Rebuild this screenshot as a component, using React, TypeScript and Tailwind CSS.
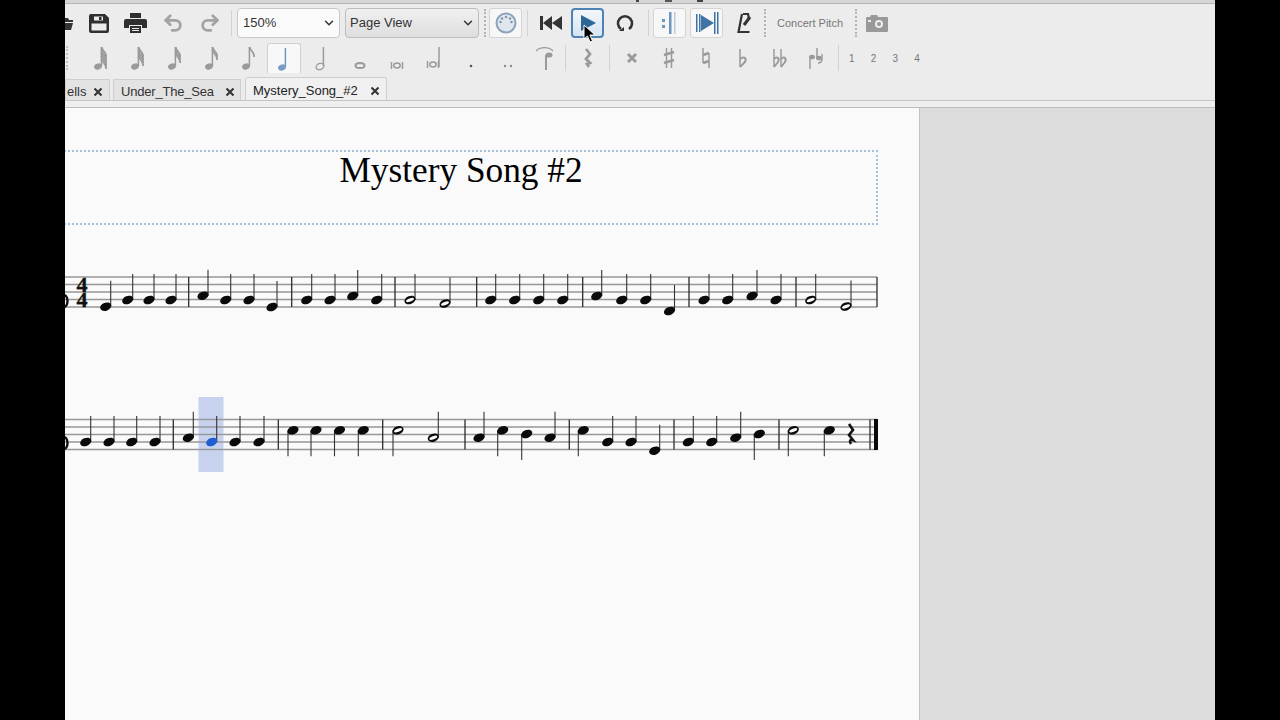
import { ReactNode } from 'react'
import { ChevronDown, Undo2, Redo2 } from 'lucide-react'

type Note = [number, number, 'q' | 'h', 'u' | 'd']

const staffOne: Note[] = [
  [105.7, 306.7, 'q', 'u'], [127.7, 300, 'q', 'u'], [149, 300, 'q', 'u'], [171, 300, 'q', 'u'],
  [203, 295.7, 'q', 'u'], [225.7, 300, 'q', 'u'], [249, 300, 'q', 'u'], [272, 307, 'q', 'u'],
  [306.7, 300, 'q', 'u'], [330, 300, 'q', 'u'], [352.7, 296, 'q', 'u'], [376.7, 300, 'q', 'u'],
  [410, 300, 'h', 'u'], [445, 303.5, 'h', 'u'],
  [490.7, 300, 'q', 'u'], [514.7, 300, 'q', 'u'], [538.7, 300, 'q', 'u'], [562.7, 300, 'q', 'u'],
  [596.7, 296, 'q', 'u'], [621.7, 300, 'q', 'u'], [645.7, 300, 'q', 'u'], [669.5, 311, 'q', 'u'],
  [704, 300, 'q', 'u'], [727.7, 300, 'q', 'u'], [752, 296, 'q', 'u'], [776, 300, 'q', 'u'],
  [810.7, 300, 'h', 'u'], [846, 306.5, 'h', 'u'],
]

const staffTwo: Note[] = [
  [85.7, 442, 'q', 'u'], [109, 442, 'q', 'u'], [131.7, 442, 'q', 'u'], [155, 442, 'q', 'u'],
  [188.3, 437.7, 'q', 'u'], [235, 442, 'q', 'u'], [259, 442, 'q', 'u'],
  [293, 430.3, 'q', 'd'], [316, 430.3, 'q', 'd'], [339.5, 430.3, 'q', 'd'], [363.3, 430.3, 'q', 'd'],
  [398, 430.3, 'h', 'd'], [433.3, 437.7, 'h', 'u'],
  [479, 437.7, 'q', 'u'], [502.7, 430.3, 'q', 'd'], [526.7, 434, 'q', 'd'], [550, 437.7, 'q', 'u'],
  [583.3, 430.3, 'q', 'd'], [607.7, 442, 'q', 'u'], [631, 442, 'q', 'u'], [654.7, 450.7, 'q', 'u'],
  [688.3, 442, 'q', 'u'], [711.7, 442, 'q', 'u'], [735.7, 437.7, 'q', 'u'], [759.3, 434, 'q', 'd'],
  [793.3, 430.3, 'h', 'd'], [829.3, 430.3, 'q', 'd'],
]

function ScoreNote({ note, color = '#0a0a0a' }: { note: Note; color?: string }) {
  const [x, y, kind, dir] = note
  const stemX = dir === 'u' ? x + 5 : x - 5
  const stemEnd = dir === 'u' ? y - 26 : y + 26
  return (
    <g>
      <line x1={stemX} x2={stemX} y1={y} y2={stemEnd} stroke="#333" strokeWidth="1.1" />
      <ellipse cx={x} cy={y} rx="5.8" ry="4" fill={color} transform={`rotate(-22 ${x} ${y})`} />
      {kind === 'h' && (
        <ellipse cx={x} cy={y} rx="4.2" ry="1.6" fill="#fafafa" transform={`rotate(-22 ${x} ${y})`} />
      )}
    </g>
  )
}

function Staff({ top, bars, notes, height, y0, children }: {
  top: number
  bars: number[]
  notes: Note[]
  height: number
  y0: number
  children?: ReactNode
}) {
  return (
    <svg viewBox={`65 ${y0} 854 ${height}`} className="block w-[854px]" style={{ height }}>
      {[0, 1, 2, 3, 4].map((i) => (
        <line key={i} x1="65" x2="877" y1={top + i * 7.5} y2={top + i * 7.5} stroke="#969696" strokeWidth="1.4" />
      ))}
      {bars.map((b) => (
        <line key={b} x1={b} x2={b} y1={top} y2={top + 30} stroke="#2c2c2c" strokeWidth="1.3" />
      ))}
      {children}
      {notes.map((n, i) => (
        <ScoreNote key={i} note={n} />
      ))}
    </svg>
  )
}

function NoteGlyph({ flags = 0, head = '#9a9a9a', stem = '#9a9a9a', open = false }: {
  flags?: number
  head?: string
  stem?: string
  open?: boolean
}) {
  return (
    <svg width="18" height="28" viewBox="0 0 18 28" className="ml-[3px]">
      <line x1="8.4" x2="8.4" y1="3" y2="22" stroke={stem} strokeWidth="1.5" />
      {Array.from({ length: flags }).map((_, i) => (
        <path key={i} d={`M8.4 ${3 + i * 3} C9 ${7 + i * 3} 14 ${8 + i * 3} 13 ${13 + i * 3}`} fill="none" stroke={stem} strokeWidth="1.8" />
      ))}
      <ellipse cx="5" cy="22.5" rx="4" ry="3" fill={open ? 'none' : head} stroke={head} strokeWidth={open ? 1.3 : 0} transform="rotate(-22 5 22.5)" />
    </svg>
  )
}

function GrayIcon({ children }: { children: ReactNode }) {
  return (
    <svg width="24" height="28" viewBox="0 0 24 28" fill="none" stroke="#9a9a9a" strokeWidth="1.5">
      {children}
    </svg>
  )
}

function Slot({ children, className = 'w-[37px]' }: { children?: ReactNode; className?: string }) {
  return <div className={`flex h-[30px] items-center justify-center ${className}`}>{children}</div>
}

function Handle({ className = '' }: { className?: string }) {
  return <div className={`h-[28px] w-0 border-l-2 border-dotted border-[#b4b4b4] ${className}`} />
}

function Sep({ className = '' }: { className?: string }) {
  return <div className={`h-[26px] w-px bg-[#d2d2d2] ${className}`} />
}

function ToggleButton({ children, className = '' }: { children: ReactNode; className?: string }) {
  return (
    <div className={`flex h-[30px] w-[33px] items-center justify-center rounded-[3px] border border-[#d4d4d4] bg-[#f7f7f7] ${className}`}>
      {children}
    </div>
  )
}

function Tab({ label, active, className = '' }: { label: string; active?: boolean; className?: string }) {
  return (
    <div
      className={`flex items-center justify-between border border-b-0 border-[#cfcfcf] pt-[4px] text-[13px] ${
        active ? 'h-[23px] rounded-t-[3px] bg-[#f0f0f0] text-[#222]' : 'h-[21px] bg-[#e3e3e3] text-[#333]'
      } ${className}`}
    >
      <span>{label}</span>
      <svg width="10" height="10" viewBox="0 0 10 10" stroke="#333" strokeWidth="2">
        <path d="M1.5 1.5l7 7M8.5 1.5l-7 7" />
      </svg>
    </div>
  )
}

export default function App() {
  return (
    <div className="flex h-[720px] w-[1280px] overflow-hidden bg-black font-['Liberation_Sans',sans-serif]">
      <div className="ml-[65px] flex h-full w-[1150px] flex-col overflow-hidden bg-[#dcdcdc]">
        {/* title bar sliver, only the descenders of the window title show */}
        <div className="flex h-[4px] items-start border-b border-[#b5b5b5] bg-[#d6d6d6]">
          <div className="ml-[571px] h-[2px] w-[3px] bg-[#444]" />
          <div className="ml-[26px] h-[2px] w-[7px] bg-[#555]" />
          <div className="ml-[25px] h-[2px] w-[6px] bg-[#444]" />
        </div>

        <div className="h-[97px] border-b border-[#c4c4c4] bg-[#ececec]">
          {/* Row 1: file, view, playback */}
          <div className="flex h-[34px] items-center pt-[4px]">
            <svg width="8" height="18" viewBox="0 0 8 18" fill="#333">
              <path d="M0 4h3l1 2h4v2H0zM0 9h8l-2 7H0z" />
            </svg>
            <svg width="20" height="19" viewBox="0 0 20 19" className="ml-[16px]">
              <path
                fillRule="evenodd"
                fill="#2f2f2f"
                d="M2 0h14l4 4v13a2 2 0 0 1-2 2H2a2 2 0 0 1-2-2V2a2 2 0 0 1 2-2zM5 2.500v4h9v-4zM2.500 9.500v7h15v-7z"
              />
              <rect x="10" y="3" width="2.500" height="3" fill="#2f2f2f" />
            </svg>
            <svg width="23" height="20" viewBox="0 0 23 20" fill="#2f2f2f" className="ml-[15px]">
              <path d="M6 0h11v5H6zM2 6h19a2 2 0 0 1 2 2v7h-5v-3H5v3H0V8a2 2 0 0 1 2-2z" />
              <path d="M6 13h11v7H6z" />
              <path d="M8 15h7v1H8zM8 17h7v1H8z" fill="#ececec" />
            </svg>
            <Undo2 size={22} strokeWidth={3} className="ml-[15px] text-[#a3a3a3]" />
            <Redo2 size={22} strokeWidth={3} className="ml-[15px] text-[#a3a3a3]" />
            <Sep className="ml-[10px]" />
            <div className="ml-[5px] flex h-[30px] w-[103px] items-center justify-between rounded-[4px] border border-[#c8c8c8] bg-[#fbfbfb] pl-[5px] pr-[3px] text-[13px] text-[#333]">
              150%
              <ChevronDown size={14} strokeWidth={2.5} className="text-[#333]" />
            </div>
            <div className="ml-[5px] flex h-[30px] w-[134px] items-center justify-between rounded-[4px] border border-[#bdbdbd] bg-gradient-to-b from-[#f0f0f0] to-[#dedede] pl-[4px] pr-[3px] text-[13px] text-[#333]">
              Page View
              <ChevronDown size={14} strokeWidth={2.5} className="text-[#333]" />
            </div>
            <Handle className="ml-[5px]" />
            <ToggleButton className="ml-[3px]">
              <svg width="24" height="24" viewBox="0 0 24 24">
                <circle cx="12" cy="12" r="9.5" fill="#dfe6ee" stroke="#8ca3bb" strokeWidth="2" />
                {[[6.5, 11], [8, 7.5], [12, 6], [16, 7.5], [17.5, 11]].map(([x, y]) => (
                  <circle key={x} cx={x} cy={y} r="1.2" fill="#7d94ac" />
                ))}
              </svg>
            </ToggleButton>
            <Sep className="ml-[5px]" />
            <svg width="22" height="14" viewBox="0 0 22 14" fill="#333" className="ml-[12px]">
              <path d="M0 0h3v14H0zM12 0v14L3 7zM22 0v14L12 7z" />
            </svg>
            <div className="relative ml-[9px] flex h-[30px] w-[33px] items-center justify-center rounded-[4px] border-2 border-[#4f83b5] bg-gradient-to-b from-[#f3f7fb] to-[#d6e4f2]">
              <svg width="16" height="16" viewBox="0 0 16 16" fill="#2f6698">
                <path d="M1 0l15 8-15 8z" />
              </svg>
              <svg width="14" height="20" viewBox="0 0 14 20" className="absolute left-[10px] top-[14px]">
                <path d="M1 1v14l3.5-3 2.5 6 2.5-1-2.5-6h5z" fill="#000" stroke="#fff" strokeWidth="1" />
              </svg>
            </div>
            <svg width="18" height="18" viewBox="0 0 18 18" fill="none" stroke="#333" strokeWidth="2.6" className="ml-[12px]">
              <path d="M5 15a7 7 0 1 1 8 0" />
              <path d="M3 17h5v-4z" fill="#333" stroke="none" />
            </svg>
            <Sep className="ml-[14px]" />
            <ToggleButton className="ml-[4px]">
              <svg width="18" height="24" viewBox="0 0 18 24" fill="#6f97bd">
                <rect x="1" y="8" width="3" height="3" />
                <rect x="1" y="14" width="3" height="3" />
                <rect x="8" y="1" width="2.5" height="22" />
                <rect x="13" y="1" width="1.5" height="22" fill="#b9cde0" />
              </svg>
            </ToggleButton>
            <ToggleButton className="ml-[4px]">
              <svg width="24" height="24" viewBox="0 0 24 24" fill="#3f73a5">
                <rect x="1" y="3" width="1.5" height="18" />
                <rect x="4" y="3" width="1.5" height="18" />
                <path d="M6 4l13 8-13 8z" />
                <rect x="19" y="1" width="1.5" height="22" />
                <rect x="22" y="1" width="1.5" height="22" />
              </svg>
            </ToggleButton>
            <svg width="15" height="20" viewBox="0 0 15 20" fill="none" stroke="#333" strokeWidth="2.2" className="ml-[14px]">
              <path d="M6 1h5l1 5M5 1L1.500 19h11" />
              <path d="M7 12L13 4" strokeWidth="3" />
            </svg>
            <Handle className="ml-[12px]" />
            <span className="ml-[11px] text-[11px] text-[#777]">Concert Pitch</span>
            <Handle className="ml-[12px]" />
            <svg width="22" height="17" viewBox="0 0 22 17" className="ml-[9px]">
              <path d="M1 2h3l1-2h6l1 2h9a1 1 0 0 1 1 1v13a1 1 0 0 1-1 1H1a1 1 0 0 1-1-1V3a1 1 0 0 1 1-1z" fill="#999" />
              <circle cx="13" cy="9" r="4" fill="#ececec" />
              <circle cx="13" cy="9" r="2" fill="#999" />
              <rect x="2" y="5" width="3" height="2" fill="#ececec" />
            </svg>
          </div>

          {/* Row 2: note input */}
          <div className="flex h-[36px] items-center pt-[4px]">
            <div className="ml-[1px] h-[24px] w-0 border-l-2 border-dotted border-[#c4c4c4]" />
            <div className="ml-[14px] flex items-center">
              <Slot><NoteGlyph flags={5} /></Slot>
              <Slot><NoteGlyph flags={4} /></Slot>
              <Slot><NoteGlyph flags={3} /></Slot>
              <Slot><NoteGlyph flags={2} /></Slot>
              <Slot><NoteGlyph flags={1} /></Slot>
              <div className="mr-[3px] flex h-[30px] w-[34px] items-center justify-center rounded-t-[3px] border border-b-0 border-[#cfcfcf] bg-[#f8f8f8]">
                <NoteGlyph head="#7b9cc0" stem="#6f97c4" />
              </div>
              <Slot><NoteGlyph open /></Slot>
              <Slot>
                <GrayIcon><ellipse cx="12" cy="21.500" rx="4.5" ry="2.6" strokeWidth="2" /></GrayIcon>
              </Slot>
              <Slot>
                <GrayIcon>
                  <ellipse cx="12" cy="21.500" rx="3.2" ry="2.4" strokeWidth="1.5" />
                  <path d="M6.500 18v7M17.500 18v7" />
                </GrayIcon>
              </Slot>
              <Slot>
                <GrayIcon>
                  <ellipse cx="11" cy="20.500" rx="3.2" ry="2.4" strokeWidth="1.5" />
                  <path d="M5.500 17v7M16.500 17v7M17 3v20" />
                </GrayIcon>
              </Slot>
              <Slot>
                <GrayIcon><circle cx="12" cy="22" r="1.3" fill="#555" stroke="none" /></GrayIcon>
              </Slot>
              <Slot>
                <GrayIcon>
                  <circle cx="9" cy="22" r="1.2" fill="#8a8a8a" stroke="none" />
                  <circle cx="15" cy="22" r="1.2" fill="#8a8a8a" stroke="none" />
                </GrayIcon>
              </Slot>
              <Slot>
                <GrayIcon>
                  <path d="M3 7a10 7 0 0 1 17 0" strokeWidth="1.2" />
                  <path d="M13 11v15" strokeWidth="2" />
                  <ellipse cx="16" cy="11" rx="3.5" ry="2.6" fill="#9a9a9a" stroke="none" />
                </GrayIcon>
              </Slot>
              <Sep className="ml-[2px]" />
              <Slot className="w-[43px]">
                <svg width="12" height="22" viewBox="0 0 12 22" fill="none" stroke="#9a9a9a" strokeWidth="2.8">
                  <path d="M4 2l4 5-4 5 4 4-3 1 2 3" />
                </svg>
              </Slot>
              <Sep />
              <Slot className="ml-[3px] w-[37px]">
                <svg width="12" height="12" viewBox="0 0 12 12" stroke="#9a9a9a" strokeWidth="3">
                  <path d="M2 2l8 8M10 2l-8 8" />
                </svg>
              </Slot>
              <Slot>
                <svg width="12" height="22" viewBox="0 0 12 22" stroke="#9a9a9a">
                  <path d="M3.500 1v20M8.500 1v20" strokeWidth="1.5" />
                  <path d="M1 8l10-3M1 16l10-3" strokeWidth="2.5" />
                </svg>
              </Slot>
              <Slot>
                <svg width="10" height="22" viewBox="0 0 10 22" stroke="#9a9a9a" fill="none">
                  <path d="M2 1v15M8 6v15" strokeWidth="1.5" />
                  <path d="M2 8l6-2M2 16l6-2" strokeWidth="2.5" />
                </svg>
              </Slot>
              <Slot>
                <svg width="10" height="22" viewBox="0 0 10 22" stroke="#9a9a9a" fill="none">
                  <path d="M2 2v18" strokeWidth="1.5" />
                  <path d="M2 12c4-3 7-1 5 3l-5 5" strokeWidth="2" />
                </svg>
              </Slot>
              <Slot>
                <svg width="16" height="22" viewBox="0 0 16 22" stroke="#9a9a9a" fill="none">
                  <path d="M2 2v18M9 2v18" strokeWidth="1.5" />
                  <path d="M2 12c3-3 6-1 4 3l-4 5M9 12c3-3 6-1 4 3l-4 5" strokeWidth="2" />
                </svg>
              </Slot>
              <Slot>
                <svg width="20" height="24" viewBox="0 0 20 24" stroke="#9a9a9a" fill="none">
                  <path d="M3 11v12M10 2v11" strokeWidth="1.5" />
                  <ellipse cx="5" cy="11" rx="3" ry="2.3" fill="#9a9a9a" stroke="none" />
                  <ellipse cx="12" cy="12" rx="3" ry="2.3" fill="#9a9a9a" stroke="none" />
                  <path d="M15 8v5c0 3-2 4-4 4" strokeWidth="1.4" />
                </svg>
              </Slot>
              <Sep className="ml-[3px]" />
              <div className="ml-[2px] flex text-[10px] text-[#777]">
                {['1', '2', '3', '4'].map((n) => (
                  <span key={n} className="w-[21.7px] text-center">{n}</span>
                ))}
              </div>
            </div>
          </div>

          {/* Row 3: score tabs */}
          <div className="flex h-[26px] items-end">
            <Tab label="ells" className="w-[45px] pl-[1px] pr-[6px]" />
            <Tab label="Under_The_Sea" className="ml-[3px] w-[128px] pl-[7px] pr-[5px] tracking-[-0.2px]" />
            <Tab label="Mystery_Song_#2" active className="ml-[4px] w-[142px] pl-[7px] pr-[6px]" />
          </div>
        </div>

        <div className="h-[7px] border-b border-[#bcbcbc] bg-[#efefef]" />

        {/* Score canvas */}
        <div className="flex flex-1 overflow-hidden">
          <div className="h-full w-[855px] shrink-0 overflow-hidden border-r border-[#c4c4c4] bg-[#fafafa]">
            <div className="ml-[-21px] mt-[42px] h-[75px] w-[834px] border-2 border-dotted border-[#a6c0dc] text-center font-['Liberation_Serif',serif] text-[35.3px] leading-[38px] text-black">
              Mystery Song #2
            </div>
            <div className="mt-[37px]">
              <Staff
                top={277}
                y0={262}
                height={60}
                notes={staffOne}
                bars={[188.7, 291.7, 395, 476.7, 582.7, 689, 796, 877]}
              >
                <ellipse cx="64" cy="301" rx="3.5" ry="6" fill="none" stroke="#111" strokeWidth="2.4" />
                <text x="82" y="292" textAnchor="middle" fontFamily="Liberation Serif" fontWeight="700" fontSize="22" fill="#111" stroke="#111" strokeWidth="0.4">4</text>
                <text x="82" y="307" textAnchor="middle" fontFamily="Liberation Serif" fontWeight="700" fontSize="22" fill="#111" stroke="#111" strokeWidth="0.4">4</text>
              </Staff>
            </div>
            <div className="mt-[73px]">
              <Staff
                top={419.5}
                y0={395}
                height={80}
                notes={staffTwo}
                bars={[173.3, 278.3, 382.7, 465, 569.3, 674, 779, 870]}
              >
                <rect x="198.500" y="397" width="25" height="75" fill="#c6d2ee" />
                {[0, 1, 2, 3, 4].map((i) => (
                  <line key={i} x1="198.500" x2="223.500" y1={419.5 + i * 7.5} y2={419.5 + i * 7.5} stroke="#969696" strokeWidth="1.4" />
                ))}
                <ScoreNote note={[211.7, 442, 'q', 'u']} color="#1f5fd0" />
                <ellipse cx="64" cy="443" rx="3.5" ry="6" fill="none" stroke="#111" strokeWidth="2.4" />
                <path d="M849 424l4 6-4 5 4 5c-3-1-4 1-2 4" fill="none" stroke="#111" strokeWidth="2.6" />
                <rect x="874" y="419" width="4" height="31" fill="#0a0a0a" />
              </Staff>
            </div>
          </div>
          <div className="flex-1 bg-[#dcdcdc]" />
        </div>
      </div>
    </div>
  )
}
